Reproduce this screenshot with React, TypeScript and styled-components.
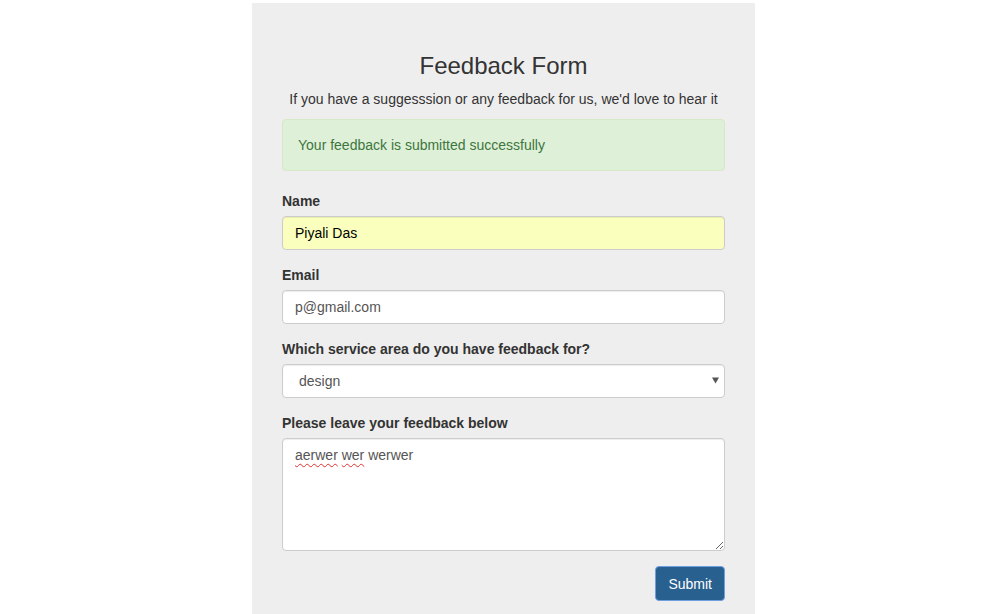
import React from "react";
import styled, { createGlobalStyle } from "styled-components";

const GlobalStyle = createGlobalStyle`
  * {
    box-sizing: border-box;
  }
  body {
    margin: 0;
    background: #fff;
    font-family: "Liberation Sans", Arial, Helvetica, sans-serif;
    font-size: 14px;
    line-height: 20px;
    color: #333;
  }
`;

const services = ["design", "development", "marketing", "support"];

const App = () => {
  return (
    <>
      <GlobalStyle />
      <Panel>
        <Title>Feedback Form</Title>
        <Lead>
          If you have a suggesssion or any feedback for us, we'd love to hear it
        </Lead>
        <Alert role="alert">Your feedback is submitted successfully</Alert>
        <form onSubmit={(e) => e.preventDefault()}>
          <FormGroup>
            <Label htmlFor="name">Name</Label>
            <Input id="name" type="text" defaultValue="Piyali Das" $autofill />
          </FormGroup>
          <FormGroup>
            <Label htmlFor="email">Email</Label>
            <Input id="email" type="email" defaultValue="p@gmail.com" />
          </FormGroup>
          <FormGroup>
            <Label htmlFor="service">
              Which service area do you have feedback for?
            </Label>
            <SelectWrap>
              <Select id="service" defaultValue="design">
                {services.map((s) => (
                  <option key={s} value={s}>
                    {s}
                  </option>
                ))}
              </Select>
              <Caret viewBox="0 0 8 7" aria-hidden="true">
                <path d="M0 0h8L4 7z" fill="#555" />
              </Caret>
            </SelectWrap>
          </FormGroup>
          <FormGroup>
            <Label htmlFor="feedback">Please leave your feedback below</Label>
            <TextBox id="feedback" role="textbox" aria-multiline="true">
              <Misspelt>aerwer</Misspelt> <Misspelt>wer</Misspelt> werwer
            </TextBox>
          </FormGroup>
          <Actions>
            <SubmitButton type="submit">Submit</SubmitButton>
          </Actions>
        </form>
      </Panel>
    </>
  );
};

export default App;

const Panel = styled.div`
  width: 503px;
  margin: 3px auto 0;
  padding: 30px;
  background: #eee;
`;

const Title = styled.h3`
  margin: 20px 0 10px;
  font-size: 24px;
  font-weight: 500;
  line-height: 26px;
  text-align: center;
  color: #333;
`;

const Lead = styled.p`
  margin: 0 0 10px;
  text-align: center;
`;

const Alert = styled.div`
  margin-bottom: 20px;
  padding: 15px;
  border: 1px solid #d6e9c6;
  border-radius: 4px;
  background: #dff0d8;
  color: #3c763d;
`;

const FormGroup = styled.div`
  margin-bottom: 15px;
`;

const Label = styled.label`
  display: inline-block;
  margin-bottom: 5px;
  font-weight: 700;
`;

const Input = styled.input<{ $autofill?: boolean }>`
  display: block;
  width: 100%;
  height: 34px;
  padding: 6px 12px;
  font-family: inherit;
  font-size: 14px;
  line-height: 20px;
  color: ${(p) => (p.$autofill ? "#000" : "#555")};
  background: ${(p) => (p.$autofill ? "#faffbd" : "#fff")};
  border: 1px solid #ccc;
  border-radius: 4px;
  box-shadow: inset 0 1px 1px rgba(0, 0, 0, 0.075);
  outline: none;
`;

const SelectWrap = styled.div`
  position: relative;
`;

const Select = styled.select`
  display: block;
  width: 100%;
  height: 34px;
  padding: 6px 12px 6px 16px;
  font-family: inherit;
  font-size: 14px;
  color: #555;
  background: #fff;
  border: 1px solid #ccc;
  border-radius: 4px;
  box-shadow: inset 0 1px 1px rgba(0, 0, 0, 0.075);
  appearance: none;
  outline: none;
`;

const Caret = styled.svg`
  position: absolute;
  right: 6px;
  top: 13px;
  width: 7px;
  height: 7px;
  pointer-events: none;
`;

const TextBox = styled.div`
  width: 100%;
  height: 113px;
  padding: 6px 12px;
  font-size: 14px;
  line-height: 20px;
  color: #555;
  background: #fff;
  border: 1px solid #ccc;
  border-radius: 4px;
  box-shadow: inset 0 1px 1px rgba(0, 0, 0, 0.075);
  overflow: auto;
  resize: vertical;
`;

const Misspelt = styled.span`
  text-decoration: underline wavy #e0312f;
  text-decoration-thickness: 1px;
  text-underline-offset: 3px;
`;

const Actions = styled.div`
  display: flex;
  justify-content: flex-end;
`;

const SubmitButton = styled.button`
  height: 35px;
  padding: 6px 12px;
  font-family: inherit;
  font-size: 14px;
  line-height: 20px;
  color: #fff;
  background: #286090;
  border: 1px solid #6f9fe0;
  border-radius: 4px;
  cursor: pointer;
`;
